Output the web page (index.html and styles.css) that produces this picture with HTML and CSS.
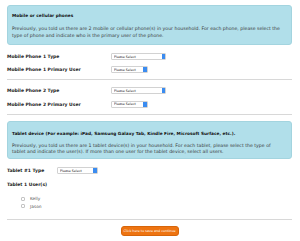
FILE: index.html
```
<!DOCTYPE html>
<html lang="en">
<head>
    <meta charset="UTF-8">
    <meta name="viewport" content="width=device-width, initial-scale=1.0">
    <title>Household Devices</title>
    <link rel="stylesheet" href="styles.css">
</head>
<body>
    <form class="survey">
        <!-- Phones -->
        <section class="notice notice-phones">
            <h3>Mobile or cellular phones</h3>
            <p>Previously, you told us there are 2 mobile or cellular phone(s) in your household. For each phone, please select the type of phone and indicate who is the primary user of the phone.</p>
        </section>

        <div class="group group-first">
            <div class="row">
                <label for="phone1Type">Mobile Phone 1 Type</label>
                <select id="phone1Type" class="picker picker-wide"><option>Please Select</option></select>
            </div>
            <div class="row">
                <label for="phone1User">Mobile Phone 1 Primary User</label>
                <select id="phone1User" class="picker picker-narrow"><option>Please Select</option></select>
            </div>
        </div>

        <hr>

        <div class="group group-second">
            <div class="row">
                <label for="phone2Type">Mobile Phone 2 Type</label>
                <select id="phone2Type" class="picker picker-wide"><option>Please Select</option></select>
            </div>
            <div class="row row-tall">
                <label for="phone2User">Mobile Phone 2 Primary User</label>
                <select id="phone2User" class="picker picker-narrow"><option>Please Select</option></select>
            </div>
        </div>

        <hr>

        <!-- Tablets -->
        <section class="notice notice-tablets">
            <h3>Tablet device (For example: iPad, Samsung Galaxy Tab, Kindle Fire, Microsoft Surface, etc.).</h3>
            <p>Previously, you told us there are 1 tablet device(s) in your household. For each tablet, please select the type of tablet and indicate the user(s). If more than one user for the tablet device, select all users.</p>
        </section>

        <div class="row row-tablet">
            <label for="tablet1Type">Tablet #1 Type</label>
            <select id="tablet1Type" class="picker picker-tablet"><option>Please Select</option></select>
        </div>

        <div class="users">
            <div class="users-title">Tablet 1 User(s)</div>
            <label class="check"><input type="checkbox"> Kelly</label>
            <label class="check"><input type="checkbox"> Jason</label>
        </div>

        <hr>

        <div class="actions">
            <button type="submit">Click here to save and continue</button>
        </div>
    </form>
</body>
</html>
```

FILE: styles.css
```
body {
    margin: 0;
    padding: 0;
    background-color: #fff;
    font-family: "DejaVu Sans", Verdana, sans-serif;
    color: #222;
}

.survey {
    width: 285px;
    margin: 0 0 0 7px;
    padding-top: 5px;
}

/* Blue info boxes */
.notice {
    background-color: #b1dfea;
    border: 1px solid #a3d4df;
    border-radius: 3px;
    padding: 7px 6px 5px 4px;
    height: 38px;
    box-sizing: border-box;
}

.notice h3 {
    margin: 0 0 7px;
    font-size: 4.3px;
    line-height: 6px;
    font-weight: bold;
    color: #111;
}

.notice p {
    margin: 0;
    font-size: 4.65px;
    line-height: 6.5px;
    color: #3a3a3a;
}

.notice-phones {
    height: 40px;
}

/* Label + select rows */
.group-first {
    margin-top: 5px;
}

.group-second {
    margin-top: 4px;
}

.row {
    display: flex;
    align-items: center;
    height: 13px;
}

.row-tall {
    height: 14px;
}

.row label {
    width: 104px;
    flex-shrink: 0;
    font-size: 4.5px;
    font-weight: bold;
    color: #222;
}

.picker {
    -webkit-appearance: none;
    appearance: none;
    height: 7px;
    padding: 0 0 0 2px;
    border: 1px solid #d2d2d2;
    border-radius: 1px;
    font-family: "DejaVu Sans", sans-serif;
    font-size: 3.3px;
    color: #222;
    background: linear-gradient(to left, #3b8cf0 4px, #fff 4px);
}

.picker-wide {
    width: 55px;
    background: linear-gradient(to left, #3b8cf0 3px, #fff 3px);
}

.picker-narrow {
    width: 37px;
}

.picker-tablet {
    width: 41px;
}

hr {
    border: none;
    border-top: 1px solid #d8d8d8;
    margin: 3px 0 0;
    height: 0;
}

/* Tablet section */
.notice-tablets {
    margin-top: 6px;
    padding-top: 8.5px;
}

.notice-tablets h3 {
    margin-bottom: 6px;
}

.row-tablet {
    margin-top: 5px;
    height: 13px;
}

.row-tablet label {
    width: 50px;
}

.users {
    padding-top: 4px;
}

.users-title {
    font-size: 4.5px;
    font-weight: bold;
    line-height: 7px;
    margin-bottom: 7px;
}

.check {
    display: flex;
    align-items: center;
    gap: 5px;
    padding-left: 14px;
    height: 7.5px;
    font-size: 4.3px;
    color: #555;
}

.check input {
    -webkit-appearance: none;
    appearance: none;
    width: 4px;
    height: 4px;
    margin: 0;
    border: 1px solid #c4c4c4;
    border-radius: 1px;
    background-color: #fff;
}

.users + hr {
    margin-top: 9px;
}

.actions {
    display: flex;
    justify-content: center;
    padding-top: 6px;
}

button {
    width: 58px;
    height: 10px;
    padding: 0;
    border: 1px solid #d7650a;
    border-radius: 3px;
    background-color: #ee7411;
    color: #fff;
    font-family: "DejaVu Sans", sans-serif;
    font-size: 3.3px;
    cursor: pointer;
}

button:hover {
    background-color: #d4640a;
}
```
